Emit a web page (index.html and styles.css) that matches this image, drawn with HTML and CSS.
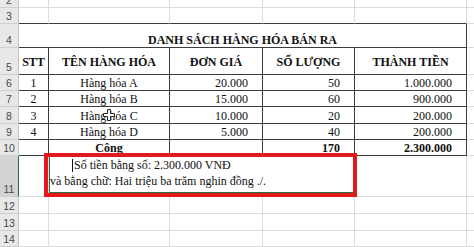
FILE: index.html
```html
<!DOCTYPE html>
<html lang="vi">
<head>
<meta charset="utf-8">
<title>Danh sách hàng hóa bán ra</title>
<link rel="stylesheet" href="styles.css">
</head>
<body>
<div class="sheet">
  <div class="grid">
    <!-- row 2 -->
    <div class="h r2">2</div><div class="c"></div><div class="c"></div><div class="c"></div><div class="c"></div><div class="c"></div><div class="c"></div>
    <!-- row 3 -->
    <div class="h r3">3</div><div class="c db"></div><div class="c db"></div><div class="c db"></div><div class="c db"></div><div class="c db"></div><div class="c"></div>
    <!-- row 4 -->
    <div class="h r4">4</div>
    <div class="c t span5 ctr b">DANH SÁCH HÀNG HÓA BÁN RA</div>
    <div class="c"></div>
    <!-- row 5 -->
    <div class="h r5">5</div>
    <div class="c t ctr b hd">STT</div>
    <div class="c t ctr b hd">TÊN HÀNG HÓA</div>
    <div class="c t ctr b hd">ĐƠN GIÁ</div>
    <div class="c t ctr b hd">SỐ LƯỢNG</div>
    <div class="c t ctr b hd">THÀNH TIỀN</div>
    <div class="c"></div>
    <!-- row 6 -->
    <div class="h r6">6</div>
    <div class="c t ctr">1</div><div class="c t ctr">Hàng hóa A</div><div class="c t num">20.000</div><div class="c t num">50</div><div class="c t num">1.000.000</div><div class="c"></div>
    <!-- row 7 -->
    <div class="h r7">7</div>
    <div class="c t ctr">2</div><div class="c t ctr">Hàng hóa B</div><div class="c t num">15.000</div><div class="c t num">60</div><div class="c t num">900.000</div><div class="c"></div>
    <!-- row 8 -->
    <div class="h r8">8</div>
    <div class="c t ctr">3</div><div class="c t ctr">Hàng hóa C</div><div class="c t num">10.000</div><div class="c t num">20</div><div class="c t num">200.000</div><div class="c"></div>
    <!-- row 9 -->
    <div class="h r9">9</div>
    <div class="c t ctr">4</div><div class="c t ctr">Hàng hóa D</div><div class="c t num">5.000</div><div class="c t num">40</div><div class="c t num">200.000</div><div class="c"></div>
    <!-- row 10 -->
    <div class="h r10">10</div>
    <div class="c t"></div><div class="c t ctr b">Cộng</div><div class="c t"></div><div class="c t num b">170</div><div class="c t num b">2.300.000</div><div class="c"></div>
    <!-- row 11 -->
    <div class="h r11 sel">11</div>
    <div class="c"></div>
    <div class="c span3 edit">
      <div class="l1"><span class="caret"></span>Số tiền bằng số: 2.300.000 VNĐ</div>
      <div class="l2">và bằng chữ: Hai triệu ba trăm nghin đồng ./.</div>
    </div>
    <div class="c"></div><div class="c"></div>
    <!-- row 12 -->
    <div class="h r12">12</div><div class="c"></div><div class="c"></div><div class="c"></div><div class="c"></div><div class="c"></div><div class="c"></div>
    <!-- row 13 -->
    <div class="h r13">13</div><div class="c"></div><div class="c"></div><div class="c"></div><div class="c"></div><div class="c"></div><div class="c"></div>
    <!-- row 14 -->
    <div class="h r14">14</div><div class="c"></div><div class="c"></div><div class="c"></div><div class="c"></div><div class="c"></div><div class="c"></div>
    <!-- row 15 (only its top edge is in view) -->
    <div class="h r15"></div><div class="c"></div><div class="c"></div><div class="c"></div><div class="c"></div><div class="c"></div><div class="c"></div>
  </div>
  <div class="highlight"></div>
  <svg class="pointer" width="12" height="12" viewBox="0 0 12 12" aria-hidden="true">
    <path d="M4.5 0.5h3v4h4v3h-4v4h-3v-4h-4v-3h4z" fill="#fff" stroke="#222" stroke-width="1"/>
  </svg>
</div>
</body>
</html>
```
FILE: styles.css
```css
html, body {
  margin: 0;
  padding: 0;
  background: #fff;
  overflow: hidden;
}

.sheet {
  position: relative;
  width: 474px;
  height: 247px;
  overflow: hidden;
}

.grid {
  display: grid;
  margin-top: -10px;
  grid-template-columns: 19px 30px 121px 93px 92px 112px 40px;
  grid-template-rows: 18px 16px 24px 27px 16px 16px 17px 16px 16px 41px 17px 17px 16px 17px;
  font-family: "Liberation Serif", "Times New Roman", serif;
  font-size: 12px;
  line-height: 13px;
  color: #111;
}

.h {
  box-sizing: border-box;
  background: #e8e8e8;
  border-right: 1px solid #c4c4c4;
  border-bottom: 1px solid #cfcfcf;
  font-family: "Liberation Sans", Arial, sans-serif;
  font-size: 10.5px;
  line-height: 12px;
  color: #4a4a4a;
  display: flex;
  align-items: flex-end;
  justify-content: center;
  padding-bottom: 1px;
}

.h.sel {
  background: #d3d3d3;
  border-right: 1px solid #217346;
}

.c {
  box-sizing: border-box;
  border-right: 1px solid #dcdcdc;
  border-bottom: 1px solid #dcdcdc;
  display: flex;
  align-items: flex-end;
  white-space: nowrap;
  overflow: visible;
}

.c.db {
  border-bottom-color: #3c3c3c;
}

.c.t {
  border-right-color: #3c3c3c;
  border-bottom-color: #3c3c3c;
}

.ctr {
  justify-content: center;
}

.num {
  justify-content: flex-end;
  padding-right: 14px;
}

.b {
  font-weight: bold;
}

.hd {
  padding-bottom: 5px;
}

.span5 {
  grid-column: span 5;
}

.span3 {
  grid-column: span 3;
}

.edit {
  flex-direction: column;
  align-items: stretch;
  justify-content: flex-start;
  background: #fff;
  border-right: none;
  line-height: 16px;
  padding-top: 1px;
  padding-left: 1px;
  box-shadow: inset 1px -4px 0 #217346;
}

.l1 {
  padding-left: 23px;
  display: flex;
  align-items: center;
}

.caret {
  display: inline-block;
  width: 1px;
  height: 13px;
  background: #111;
  margin-right: 1px;
  margin-left: -1px;
}

.highlight {
  position: absolute;
  left: 44px;
  top: 153px;
  width: 313px;
  height: 44px;
  box-sizing: border-box;
  border: 4px solid #e3191c;
  pointer-events: none;
}

.pointer {
  position: absolute;
  left: 103px;
  top: 109px;
}
```
